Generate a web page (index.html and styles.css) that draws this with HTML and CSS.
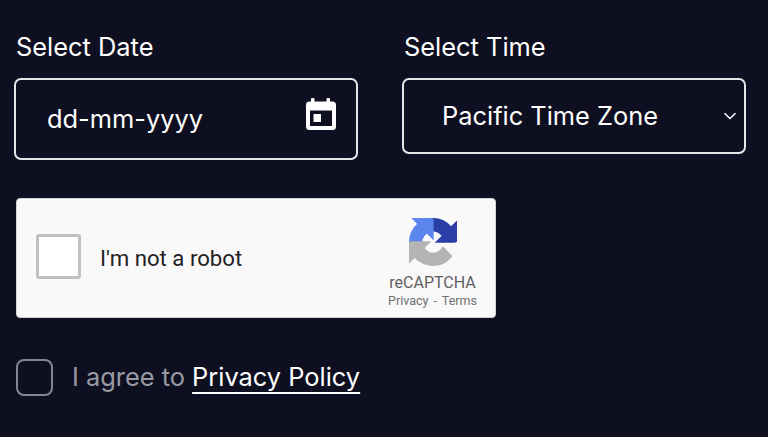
FILE: index.html
```html
<!DOCTYPE html>
<html lang="en">
<head>
  <meta charset="UTF-8">
  <meta name="viewport" content="width=device-width, initial-scale=1.0">
  <title>Select Date and Time</title>
  <link rel="stylesheet" href="styles.css">
</head>
<body>
  <form class="form">
    <div class="fields">
      <div class="field">
        <div class="label">Select Date</div>
        <div class="control control-date">
          <span>dd-mm-yyyy</span>
          <svg class="calendar" viewBox="0 0 30 32" aria-hidden="true">
            <path fill="#fff" fill-rule="evenodd" d="M5 1a1 1 0 0 1 1-1h1.500a1 1 0 0 1 1 1v2.500h12V1a1 1 0 0 1 1-1H23a1 1 0 0 1 1 1v2.500h2.500A3.500 3.500 0 0 1 30 7v21.500a3.500 3.500 0 0 1-3.500 3.500h-23A3.500 3.500 0 0 1 0 28.500V7a3.500 3.500 0 0 1 3.500-3.500H5zM4 12.500V28h22V12.500zM7.500 16H15v8H7.500z"/>
          </svg>
        </div>
      </div>
      <div class="field">
        <div class="label">Select Time</div>
        <div class="control control-select">
          <span>Pacific Time Zone</span>
          <svg class="chevron" viewBox="0 0 14 8" aria-hidden="true">
            <path fill="none" stroke="#fff" stroke-width="1.500" d="M1.500 1.200 7 6.500l5.500-5.300"/>
          </svg>
        </div>
      </div>
    </div>

    <div class="captcha">
      <div class="captcha-box"></div>
      <div class="captcha-text">I'm not a robot</div>
      <div class="captcha-brand">
        <svg class="captcha-logo" viewBox="-1 -1 66 66" aria-hidden="true">
          <path fill="#2b3ea8" stroke="#2b3ea8" stroke-width="2" d="M64 31.955l-.033-1.370V4.687l-7.160 7.160C50.948 4.674 42.033.093 32.050.093c-10.400 0-19.622 4.960-25.458 12.640l11.736 11.860a15.550 15.550 0 0 1 4.754-5.334c2.050-1.600 4.952-2.906 8.968-2.906.485 0 .860.057 1.135.163 4.976.393 9.290 3.140 11.830 7.125l-8.307 8.307 26.300.002"/>
          <path fill="#5a86ee" stroke="#5a86ee" stroke-width="2" d="M31.862.094l-1.370.033H4.594l7.160 7.160C4.580 13.147 0 22.060 0 32.046c0 10.400 4.960 19.622 12.640 25.458l11.860-11.736a15.550 15.550 0 0 1-5.334-4.754c-1.600-2.050-2.906-4.952-2.906-8.968 0-.485.057-.860.163-1.135.393-4.976 3.140-9.290 7.125-11.830l8.307 8.307.002-26.300"/>
          <path fill="#b4b4b4" stroke="#b4b4b4" stroke-width="2" d="M.001 32.045l.033 1.370v25.898l7.160-7.160c5.860 7.173 14.773 11.754 24.760 11.754 10.400 0 19.622-4.960 25.458-12.640l-11.736-11.860a15.550 15.550 0 0 1-4.754 5.334c-2.050 1.600-4.952 2.906-8.968 2.906-.485 0-.860-.057-1.135-.163-4.976-.393-9.290-3.140-11.830-7.125l8.307-8.307-26.300-.002"/>
        </svg>
        <div class="captcha-name">reCAPTCHA</div>
        <div class="captcha-links">Privacy - Terms</div>
      </div>
    </div>

    <div class="agree">
      <span class="agree-box"></span>
      <span class="agree-text">I agree to <a class="agree-link" href="#">Privacy Policy</a></span>
    </div>
  </form>
</body>
</html>
```

FILE: styles.css
```css
* {
  box-sizing: border-box;
}

body {
  margin: 0;
  height: 437px;
  overflow: hidden;
  background: #0e0f20;
  color: #fff;
  font-family: Inter, "Liberation Sans", sans-serif;
}

.form {
  padding: 32px 22px 0 14px;
}

.fields {
  display: grid;
  grid-template-columns: 344px 344px;
  gap: 44px;
  align-items: start;
}

.label {
  font-size: 25.400px;
  line-height: 30px;
  margin-bottom: 16px;
  padding-left: 2px;
}

.control {
  display: flex;
  align-items: center;
  justify-content: space-between;
  border: 2px solid #e6e6e9;
  border-radius: 7px;
  font-size: 25.400px;
}

.control-date {
  height: 82px;
  padding: 0 20px 2px 31px;
}

.control-select {
  height: 76px;
  padding: 0 7px 2px 38px;
}

.calendar {
  width: 30px;
  height: 32px;
  margin-top: -9px;
}

.chevron {
  width: 14px;
  height: 8px;
  margin-top: 2px;
}

.captcha {
  display: flex;
  align-items: center;
  width: 480px;
  height: 120px;
  margin: 38px 0 0 2px;
  padding: 0 18px 0 19px;
  background: #f9f9f9;
  border: 1px solid #d3d3d3;
  border-radius: 4px;
  font-family: Roboto, "Liberation Sans", sans-serif;
}

.captcha-box {
  width: 45px;
  height: 45px;
  margin-bottom: 4px;
  background: #fff;
  border: 3px solid #c1c1c1;
  border-radius: 3px;
}

.captcha-text {
  margin-left: 19px;
  font-size: 22.200px;
  color: #222;
}

.captcha-brand {
  display: flex;
  flex-direction: column;
  align-items: center;
  margin: 10px 0 0 auto;
  color: #5f5f5f;
}

.captcha-logo {
  width: 48px;
  height: 48px;
  filter: blur(0.4px);
}

.captcha-name {
  margin-top: 7px;
  font-size: 16px;
  line-height: 20px;
}

.captcha-links {
  font-size: 12.500px;
  line-height: 16px;
  word-spacing: 2px;
  color: #707070;
}

.agree {
  display: flex;
  align-items: center;
  gap: 19px;
  margin: 41px 0 0 2px;
}

.agree-box {
  width: 37px;
  height: 37px;
  border: 2px solid #85858f;
  border-radius: 8px;
}

.agree-text {
  margin-bottom: 2px;
  font-size: 25.400px;
  color: #9a9aa3;
}

.agree-link {
  color: #fff;
  text-decoration: underline;
  text-underline-offset: 6px;
  text-decoration-thickness: 2px;
}
```
